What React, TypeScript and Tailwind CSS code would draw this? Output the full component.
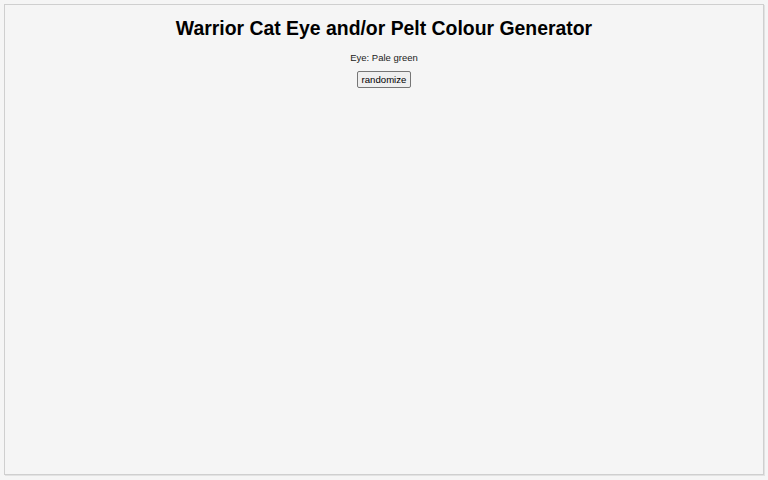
export default function App() {
  return (
    <div className="h-[480px] w-[768px] bg-[#f5f5f5] p-1 font-['Liberation_Sans',Arial,sans-serif]">
      <div className="flex h-[471px] flex-col items-center border border-[#cfcfcf] bg-[#f5f5f5] shadow-[1px_1px_0_#e2e2e2]">
        <h1 className="mt-[12px] text-[19.4px] font-bold leading-[22px] text-black">
          Warrior Cat Eye and/or Pelt Colour Generator
        </h1>
        <p className="mt-[13px] text-[9.5px] leading-[12px] text-[#222]">Eye: Pale green</p>
        <button className="mt-[7px] h-[17px] rounded-[2px] border border-[#767676] bg-[#efefef] px-[4px] text-[9.6px] leading-[13px] text-black">
          randomize
        </button>
      </div>
    </div>
  );
}
